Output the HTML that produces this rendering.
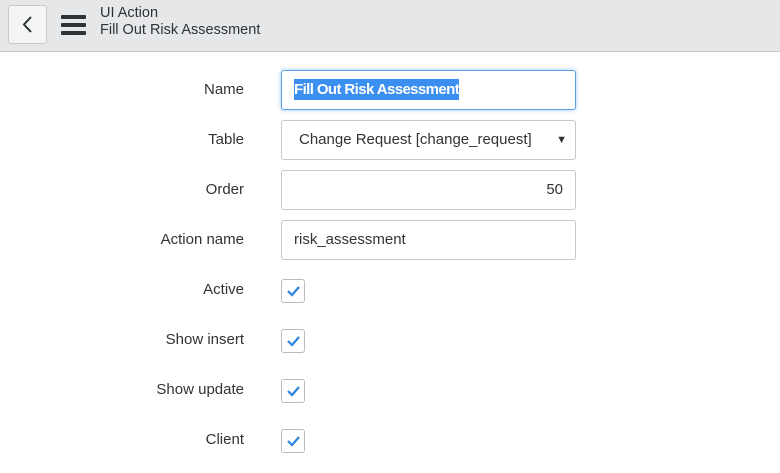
<!DOCTYPE html>
<html><head><style>
body{margin:0;width:780px;height:473px;overflow:hidden;background:#fff;font-family:"Liberation Sans",sans-serif;color:#333;}
.hdr{position:absolute;left:0;top:0;width:780px;height:51px;background:#e6e7e8;border-bottom:1px solid #c8c9ca;}
.back{position:absolute;left:8px;top:5px;width:37px;height:37px;border:1px solid #c7c8c9;border-radius:3px;background:#f4f5f5;}
.ham{position:absolute;left:61px;width:25px;height:4px;background:#2e3338;border-radius:1px;}
.t1{position:absolute;left:100px;top:5px;font-size:14.5px;color:#2e3338;}
.t2{position:absolute;left:100px;top:22px;font-size:14.5px;color:#2e3338;}
.lab{position:absolute;right:536px;font-size:15px;color:#333;}
.inp{position:absolute;left:281px;width:293px;height:38px;border:1px solid #c8c8c8;border-radius:3px;font-size:15px;line-height:38px;box-sizing:content-box;}
.cb{position:absolute;left:281px;width:22px;height:22px;border:1px solid #bbb;border-radius:3px;}
</style></head><body>
<div class="hdr">
<div class="back"><svg width="37" height="37"><path d="M22 11 L15 18.5 L22 26" stroke="#2e3338" stroke-width="2" fill="none"/></svg></div>
<div class="ham" style="top:15px"></div><div class="ham" style="top:23px"></div><div class="ham" style="top:31px"></div>
<div class="t1">UI Action</div><div class="t2">Fill Out Risk Assessment</div>
</div>
<div class="lab" style="top:81px">Name</div>
<div class="inp" style="top:70px;border-color:#5a9fe0;box-shadow:0 0 4px #9cc6f0"><span style="margin-left:12px;background:#3a8ff0;color:#fff;font-weight:bold;letter-spacing:-0.6px;padding:2px 0">Fill Out Risk Assessment</span></div>
<div class="lab" style="top:131px">Table</div>
<div class="inp" style="top:120px"><span style="margin-left:17px">Change Request [change_request]</span><span style="position:absolute;right:8px;font-size:11px">▼</span></div>
<div class="lab" style="top:181px">Order</div>
<div class="inp" style="top:170px;text-align:right"><span style="margin-right:12px">50</span></div>
<div class="lab" style="top:231px">Action name</div>
<div class="inp" style="top:220px"><span style="margin-left:12px">risk_assessment</span></div>
<div class="lab" style="top:281px">Active</div>
<div class="lab" style="top:331px">Show insert</div>
<div class="lab" style="top:381px">Show update</div>
<div class="lab" style="top:431px">Client</div>
<div class="cb" style="top:279px"><svg width="22" height="22"><path d="M6 11 L10 15 L17 7" stroke="#2f83e0" stroke-width="2.2" fill="none"/></svg></div>
<div class="cb" style="top:329px"><svg width="22" height="22"><path d="M6 11 L10 15 L17 7" stroke="#2f83e0" stroke-width="2.2" fill="none"/></svg></div>
<div class="cb" style="top:379px"><svg width="22" height="22"><path d="M6 11 L10 15 L17 7" stroke="#2f83e0" stroke-width="2.2" fill="none"/></svg></div>
<div class="cb" style="top:429px"><svg width="22" height="22"><path d="M6 11 L10 15 L17 7" stroke="#2f83e0" stroke-width="2.2" fill="none"/></svg></div>
</body></html>
